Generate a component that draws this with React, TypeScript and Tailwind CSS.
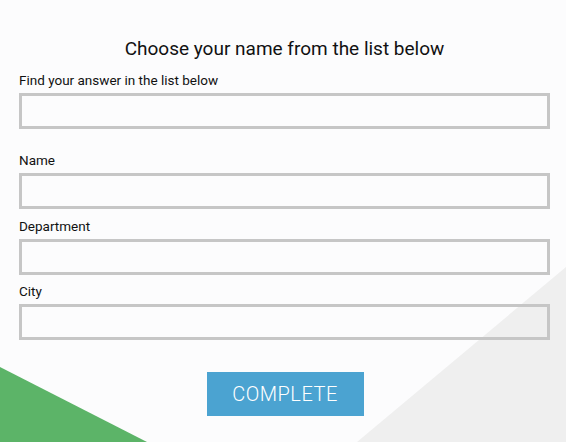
export default function App() {
  const fields = [
    { label: "Find your answer in the list below", gap: "mt-[12px]" },
    { label: "Name", gap: "mt-[23px]" },
    { label: "Department", gap: "mt-[9px]" },
    { label: "City", gap: "mt-[8px]" },
  ];

  return (
    <div
      className="relative h-[442px] w-full overflow-hidden bg-[#fcfcfd]"
      style={{ fontFamily: "Roboto, 'Liberation Sans', sans-serif" }}
    >
      {/* Decorative background shapes */}
      <svg
        className="absolute inset-0 h-full w-full"
        viewBox="0 0 566 442"
        preserveAspectRatio="none"
      >
        <polygon points="566,267 566,442 357,442" fill="#efefef" />
        <polygon points="0,367 0,442 147,442" fill="#5cb468" />
      </svg>

      <div className="relative flex flex-col pl-[19px] pr-[16px] pt-[37px]">
        <h1 className="text-center text-[19px] leading-[23px] text-[#111]">
          Choose your name from the list below
        </h1>

        {fields.map((f) => (
          <div key={f.label} className={f.gap}>
            <label className="block text-[13.5px] leading-[16px] text-[#111]">{f.label}</label>
            <input
              type="text"
              className="mt-[5px] block h-[36px] w-full border-[3px] border-[#c6c6c6] bg-transparent outline-none"
            />
          </div>
        ))}

        <div className="mt-[32px] flex justify-center">
          <button className="ml-[1px] h-[44px] w-[157px] bg-[#4ba3d1] text-[20px] font-light tracking-[0.5px] text-white">
            COMPLETE
          </button>
        </div>
      </div>
    </div>
  );
}
